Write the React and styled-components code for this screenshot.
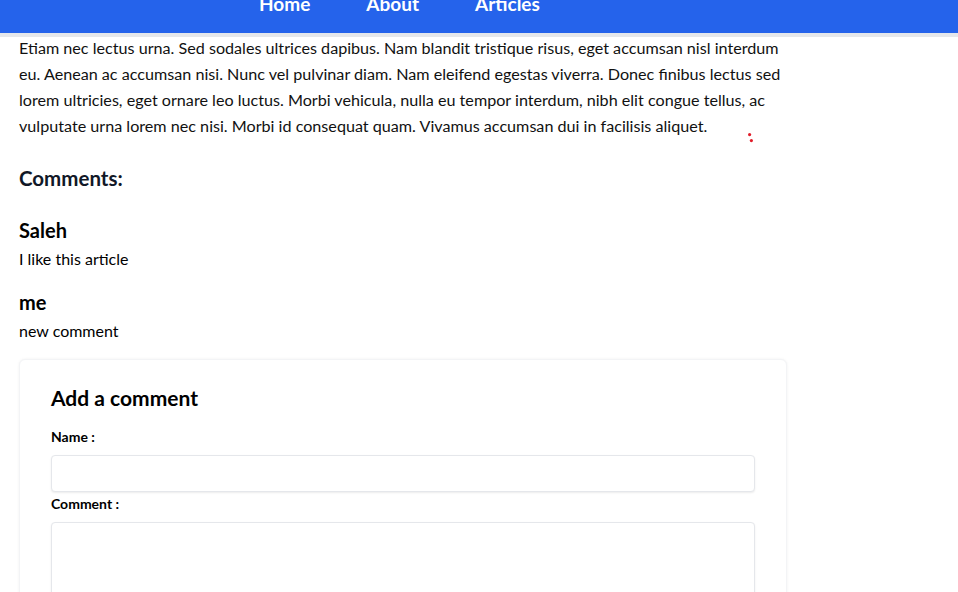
import React from "react";
import styled, { createGlobalStyle } from "styled-components";

const GlobalStyle = createGlobalStyle`
	* { box-sizing: border-box; }
	body {
		margin: 0;
		background: #ffffff;
		color: #111;
		font-family: "Segoe UI", Lato, "Open Sans", sans-serif;
		overflow: hidden;
	}
`;

const comments = [
	{ name: "Saleh", text: "I like this article" },
	{ name: "me", text: "new comment" },
];

function App() {
	return (
		<>
			<GlobalStyle />
			<NavBar>
				<NavLink>Home</NavLink>
				<NavLink>About</NavLink>
				<NavLink>Articles</NavLink>
			</NavBar>
			<Page>
				<Paragraph>
					Etiam nec lectus urna. Sed sodales ultrices dapibus. Nam blandit tristique risus, eget
					accumsan nisl interdum eu. Aenean ac accumsan nisi. Nunc vel pulvinar diam. Nam eleifend
					egestas viverra. Donec finibus lectus sed lorem ultricies, eget ornare leo luctus. Morbi
					vehicula, nulla eu tempor interdum, nibh elit congue tellus, ac vulputate urna lorem nec
					nisi. Morbi id consequat quam. Vivamus accumsan dui in facilisis aliquet.
					<Dots viewBox="0 0 6 10" aria-hidden="true">
						<circle cx="1.6" cy="1.6" r="1.6" fill="#e11d2a" />
						<circle cx="3.4" cy="7.6" r="1.6" fill="#e11d2a" />
					</Dots>
				</Paragraph>
				<SectionTitle>Comments:</SectionTitle>
				{comments.map((c) => (
					<Comment key={c.name}>
						<Author>{c.name}</Author>
						<CommentText>{c.text}</CommentText>
					</Comment>
				))}
				<Card>
					<CardTitle>Add a comment</CardTitle>
					<Label>Name :</Label>
					<Input type="text" />
					<Label>Comment :</Label>
					<TextArea rows={4} />
				</Card>
			</Page>
		</>
	);
}

export default App;

const NavBar = styled.nav`
	height: 37px;
	background: #2563eb;
	border-bottom: 4px solid #e5e7eb;
	display: flex;
	align-items: flex-start;
	gap: 56px;
	padding-left: 259px;
	overflow: hidden;
`;

const NavLink = styled.a`
	color: #fff;
	font-weight: 700;
	font-size: 19px;
	line-height: 20px;
	margin-top: -6px;
	cursor: pointer;
`;

const Page = styled.main`
	max-width: 787px;
	padding-left: 19px;
`;

const Paragraph = styled.p`
	position: relative;
	margin: -2px 0 0;
	font-size: 16.15px;
	line-height: 26px;
	color: #111;
`;

const Dots = styled.svg`
	position: absolute;
	left: 729px;
	top: 98px;
	width: 6px;
	height: 10px;
`;

const SectionTitle = styled.h3`
	margin: 25px 0 24px;
	font-size: 20.5px;
	line-height: 28px;
	font-weight: 700;
	color: #111827;
`;

const Comment = styled.div`
	margin-bottom: 16px;
`;

const Author = styled.h4`
	margin: 0 0 2px;
	font-size: 20px;
	line-height: 28px;
	font-weight: 700;
	color: #000;
`;

const CommentText = styled.p`
	margin: 0;
	font-size: 16px;
	line-height: 26px;
	color: #000;
`;

const Card = styled.div`
	width: 768px;
	margin-top: -1px;
	padding: 24px 31px 32px;
	border-radius: 6px;
	background: #fff;
	box-shadow: 0 0 3px rgba(0, 0, 0, 0.06);
	border: 1px solid #f3f4f6;
`;

const CardTitle = styled.h3`
	margin: 0 0 16px;
	font-size: 21px;
	line-height: 28px;
	font-weight: 700;
	color: #000;
`;

const Label = styled.label`
	display: block;
	font-size: 14px;
	line-height: 18px;
	font-weight: 700;
	color: #000;
	margin-bottom: 9px;
`;

const Input = styled.input`
	display: block;
	width: 100%;
	height: 37px;
	border: 1px solid #e5e7eb;
	border-radius: 4px;
	box-shadow: 0 1px 2px rgba(0, 0, 0, 0.08);
	margin-bottom: 3px;
	font-size: 16px;
	padding: 0 12px;
	outline: none;
`;

const TextArea = styled.textarea`
	display: block;
	width: 100%;
	height: 110px;
	border: 1px solid #e5e7eb;
	border-radius: 4px;
	box-shadow: 0 1px 2px rgba(0, 0, 0, 0.08);
	resize: none;
	font-size: 16px;
	padding: 8px 12px;
	outline: none;
`;
